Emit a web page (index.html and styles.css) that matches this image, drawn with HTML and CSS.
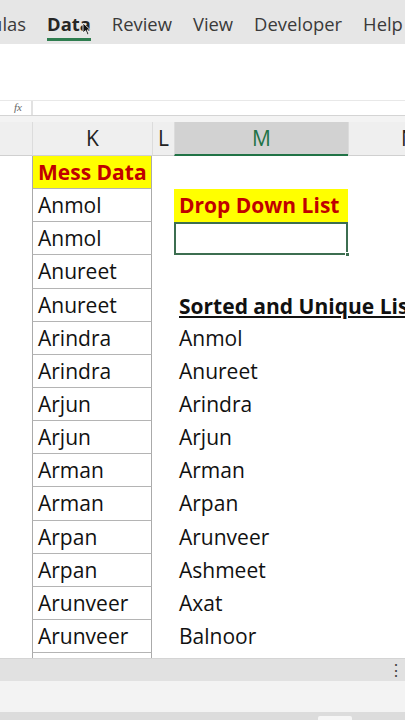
FILE: index.html
```html
<!DOCTYPE html>
<html lang="en">

<head>
    <meta charset="UTF-8">
    <meta name="viewport" content="width=device-width, initial-scale=1.0">
    <title>Sheet</title>
    <link rel="stylesheet" href="styles.css">
</head>

<body>
    <div class="ribbon">
        <div class="tabs">
            <span class="tab">Formulas</span>
            <span class="tab active">Data</span>
            <span class="tab">Review</span>
            <span class="tab">View</span>
            <span class="tab">Developer</span>
            <span class="tab">Help</span>
        </div>
        <svg class="cursor" width="10" height="14" viewBox="0 0 10 14">
            <path d="M1 1 L1 11 L3.5 8.6 L5.5 13 L7 12.3 L5.1 8 L8.5 8 Z" fill="#111" stroke="#fff" stroke-width="0.8"/>
        </svg>
    </div>
    <div class="toolbar"></div>
    <div class="formula">
        <span class="fx">fx</span>
        <span class="input"></span>
    </div>
    <div class="gap"></div>

    <div class="sheet">
        <div class="hd corner"></div>
        <div class="hd">K</div>
        <div class="hd">L</div>
        <div class="hd sel">M</div>
        <div class="hd last">N</div>

        <div class="rn"></div><div class="k title">Mess Data</div><div class="c"></div><div class="m"></div><div class="c"></div>
        <div class="rn"></div><div class="k">Anmol</div><div class="c"></div><div class="m title">Drop Down List</div><div class="c"></div>
        <div class="rn"></div><div class="k">Anmol</div><div class="c"></div><div class="m picked"><span class="handle"></span></div><div class="c"></div>
        <div class="rn"></div><div class="k">Anureet</div><div class="c"></div><div class="m"></div><div class="c"></div>
        <div class="rn"></div><div class="k">Anureet</div><div class="c"></div><div class="m head">Sorted and Unique List</div><div class="c"></div>
        <div class="rn"></div><div class="k">Arindra</div><div class="c"></div><div class="m">Anmol</div><div class="c"></div>
        <div class="rn"></div><div class="k">Arindra</div><div class="c"></div><div class="m">Anureet</div><div class="c"></div>
        <div class="rn"></div><div class="k">Arjun</div><div class="c"></div><div class="m">Arindra</div><div class="c"></div>
        <div class="rn"></div><div class="k">Arjun</div><div class="c"></div><div class="m">Arjun</div><div class="c"></div>
        <div class="rn"></div><div class="k">Arman</div><div class="c"></div><div class="m">Arman</div><div class="c"></div>
        <div class="rn"></div><div class="k">Arman</div><div class="c"></div><div class="m">Arpan</div><div class="c"></div>
        <div class="rn"></div><div class="k">Arpan</div><div class="c"></div><div class="m">Arunveer</div><div class="c"></div>
        <div class="rn"></div><div class="k">Arpan</div><div class="c"></div><div class="m">Ashmeet</div><div class="c"></div>
        <div class="rn"></div><div class="k">Arunveer</div><div class="c"></div><div class="m">Axat</div><div class="c"></div>
        <div class="rn"></div><div class="k">Arunveer</div><div class="c"></div><div class="m">Balnoor</div><div class="c"></div>
        <div class="rn"></div><div class="k"></div><div class="c"></div><div class="m"></div><div class="c"></div>
    </div>

    <div class="scrollbar"><span class="dots">⋮</span></div>
    <div class="statusbar"></div>
    <div class="taskbar"><span class="pill"></span></div>
</body>

</html>
```

FILE: styles.css
```css
* {
    margin: 0;
    padding: 0;
    box-sizing: border-box;
}

body {
    width: 405px;
    height: 720px;
    overflow: hidden;
    font-family: "Open Sans", "Noto Sans", sans-serif;
    background: #fff;
}

.ribbon {
    position: relative;
    height: 44px;
    background: #e6e6e6;
    overflow: hidden;
}

.tabs {
    display: flex;
    gap: 21px;
    margin-left: -54px;
    white-space: nowrap;
}

.tab {
    font-size: 18.4px;
    line-height: 24px;
    padding-top: 12px;
    color: #3a3a3a;
}

.tab.active {
    font-weight: 700;
    color: #262626;
    border-bottom: 3px solid #2e7d4f;
    padding-bottom: 2px;
}

.cursor {
    position: absolute;
    left: 82px;
    top: 22px;
}

.toolbar {
    height: 56px;
    background: #fff;
}

.formula {
    display: flex;
    height: 16px;
    border-top: 1px solid #e8e8e8;
    border-bottom: 1px solid #d4d4d4;
}

.fx {
    width: 33px;
    font-family: "Liberation Serif", serif;
    font-style: italic;
    font-size: 11px;
    line-height: 13px;
    color: #666;
    text-align: right;
    padding-right: 9px;
    border-right: 2px solid #e2e2e2;
}

.input {
    flex: 1;
}

.gap {
    height: 6px;
    background: #f3f3f3;
}

.sheet {
    display: grid;
    grid-template-columns: 32px 120px 22px 174px 1fr;
    grid-auto-rows: 33.15px;
    grid-template-rows: 34px;
    height: 536px;
    overflow: hidden;
}

.hd {
    background: #efefef;
    font-size: 21px;
    color: #222;
    text-align: center;
    line-height: 33px;
    border-left: 1px solid #dcdcdc;
    border-bottom: 1px solid #d0d0d0;
}

.hd.corner {
    border-left: none;
}

.hd.sel {
    background: #d2d2d2;
    color: #217346;
    border-bottom: 2px solid #217346;
}

.hd.last {
    text-align: left;
    padding-left: 52px;
    overflow: hidden;
}

.k,
.m {
    font-size: 21px;
    line-height: 33px;
    color: #111;
    padding-left: 5px;
    white-space: nowrap;
}

.k {
    border-left: 1px solid #aaa;
    border-right: 1px solid #aaa;
    border-bottom: 1px solid #b4b4b4;
}

.title {
    background: #ffff00;
    color: #c00000;
    font-weight: 700;
}

.head {
    font-weight: 700;
    text-decoration: underline;
    padding-top: 1px;
}

.picked {
    position: relative;
    border: 2px solid #3c6e50;
}

.handle {
    position: absolute;
    right: -4px;
    bottom: -4px;
    width: 5px;
    height: 5px;
    background: #3c6e50;
    border: 1px solid #fff;
}

.scrollbar {
    height: 23px;
    background: #e1e1e1;
    border-top: 1px solid #d4d4d4;
    text-align: right;
}

.dots {
    font-size: 16px;
    line-height: 22px;
    color: #444;
    padding-right: 1px;
}

.statusbar {
    height: 31px;
    background: #f3f3f3;
}

.taskbar {
    height: 8px;
    background: #dcdcdc;
    padding-left: 318px;
    padding-top: 4px;
}

.pill {
    display: block;
    width: 34px;
    height: 4px;
    background: #f6f6f6;
    border-radius: 2px 2px 0 0;
}
```
